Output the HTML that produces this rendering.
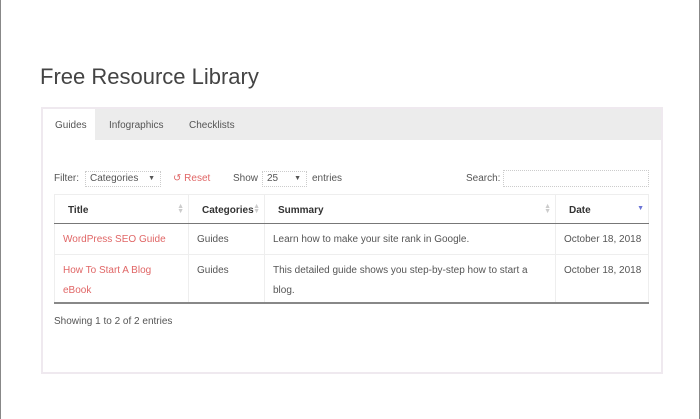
<!DOCTYPE html>
<html><head><style>
*{margin:0;padding:0;box-sizing:border-box}
body{width:700px;height:419px;background:#fff;font-family:"Liberation Sans",sans-serif;position:relative;overflow:hidden;color:#555}
.fr{position:absolute;left:0;top:0;width:700px;height:419px;border-left:1px solid #888;border-right:1px solid #888}
.a{position:absolute;white-space:nowrap}
h1{position:absolute;left:40px;top:64px;font-size:22px;font-weight:normal;color:#444}
.panel{position:absolute;left:41px;top:107px;width:622px;height:267px;border:2px solid #efe9ef;background:#fff}
.bar{position:absolute;left:0;top:0;width:618px;height:31px;background:#ececec}
.tab{position:absolute;top:0;height:31px;line-height:34px;font-size:10px;color:#555}
.f{font-size:10px;color:#555}
.sel{position:absolute;border:1px dotted #ccc;height:16px;font-size:10px;line-height:14px;padding-left:4px;color:#555}
table{position:absolute;left:54px;top:194px;width:595px;border-collapse:collapse;font-size:10px}
td,th{border-left:1px solid #eee;border-right:1px solid #eee;vertical-align:top;text-align:left}
th{height:29px;border-bottom:1px solid #777;border-top:1px solid #eee;font-weight:bold;color:#333;padding:10px 0 0 13px;position:relative}
td{padding:6px 0 0 8px;line-height:20px;color:#555}
tr.r1 td{height:31px;border-bottom:1px solid #eee}
tr.r2 td{height:48px;border-bottom:2px solid #888}
.l{color:#e06666}
.s{position:absolute;right:4px;top:9px;font-size:7px;color:#ccc;line-height:5px}
</style></head><body>
<div class="fr"></div>
<h1>Free Resource Library</h1>
<div class="panel"><div class="bar"></div>
<div class="tab" style="left:0;width:52px;background:#fff;padding-left:12px">Guides</div>
<div class="tab" style="left:66px">Infographics</div>
<div class="tab" style="left:146px">Checklists</div>
</div>
<div class="a f" style="left:54px;top:173px">Filter:</div>
<div class="sel" style="left:85px;top:171px;width:76px">Categories <span style="position:absolute;right:5px;font-size:7px">▼</span></div>
<div class="a f" style="left:173px;top:173px;color:#e06666">↺ Reset</div>
<div class="a f" style="left:233px;top:173px">Show</div>
<div class="sel" style="left:262px;top:171px;width:45px">25<span style="position:absolute;right:5px;font-size:7px">▼</span></div>
<div class="a f" style="left:312px;top:173px">entries</div>
<div class="a f" style="left:466px;top:173px">Search:</div>
<div class="sel" style="left:503px;top:170px;width:146px;height:17px"></div>
<table>
<tr><th style="width:134px">Title<span class="s">▲<br>▼</span></th><th style="width:76px">Categories<span class="s">▲<br>▼</span></th><th style="width:291px">Summary<span class="s">▲<br>▼</span></th><th>Date<span class="s" style="color:#6b74d6;top:11px">▼</span></th></tr>
<tr class="r1"><td class="l">WordPress SEO Guide</td><td>Guides</td><td>Learn how to make your site rank in Google.</td><td>October 18, 2018</td></tr>
<tr class="r2"><td class="l">How To Start A Blog<br>eBook</td><td>Guides</td><td>This detailed guide shows you step-by-step how to start a<br>blog.</td><td>October 18, 2018</td></tr>
</table>
<div class="a f" style="left:54px;top:316px">Showing 1 to 2 of 2 entries</div>
</body></html>
